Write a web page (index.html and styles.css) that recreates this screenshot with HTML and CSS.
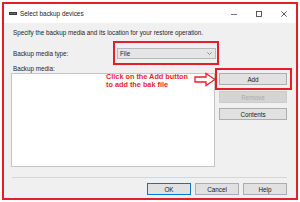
FILE: index.html
```html
<!DOCTYPE html>
<html>
<head>
<meta charset="utf-8">
<link rel="stylesheet" href="styles.css">
</head>
<body>
<div class="frame">
  <div class="titlebar">
    <svg class="ticon" width="8" height="3" viewBox="0 0 8 3"><rect x="0" y="0" width="8" height="3" fill="#3a3a3a"/><rect x="1" y="1" width="6" height="1" fill="#6a6a6a"/></svg>
    <span class="ttext">Select backup devices</span>
    <div class="wctrls">
      <svg width="6" height="6" viewBox="0 0 6 6"><line x1="0" y1="3.5" x2="6" y2="3.5" stroke="#555" stroke-width="0.8"/></svg>
      <svg width="6" height="6" viewBox="0 0 6 6"><rect x="0.5" y="0.5" width="5" height="5" fill="none" stroke="#333" stroke-width="0.8"/></svg>
      <svg width="6" height="6" viewBox="0 0 6 6"><path d="M0.3 0.3 L5.7 5.7 M5.7 0.3 L0.3 5.7" stroke="#333" stroke-width="0.8"/></svg>
    </div>
  </div>
  <div class="content">
    <p class="desc">Specify the backup media and its location for your restore operation.</p>
    <div class="typerow">
      <span class="lbl">Backup media type:</span>
      <div class="select hl-sel">
        <span>File</span>
        <svg class="chev" width="5" height="3" viewBox="0 0 5 3"><path d="M0.3 0.3 L2.5 2.5 L4.7 0.3" fill="none" stroke="#707070" stroke-width="0.7"/></svg>
      </div>
    </div>
    <div class="lbl2">Backup media:</div>
    <div class="main">
      <div class="listbox"></div>
      <div class="side">
        <button class="btn hl-add">Add</button>
        <button class="btn disabled">Remove</button>
        <button class="btn contents">Contents</button>
      </div>
      <div class="note">Click on the Add button<br>to add the bak file</div>
      <svg class="arrow" width="22" height="15" viewBox="0 0 22 15"><polygon points="1,5 12,5 12,1.5 21,7.5 12,13.5 12,10 1,10" fill="none" stroke="#e51f2a" stroke-width="1.3" stroke-linejoin="miter"/></svg>
    </div>
    <div class="sep"></div>
    <div class="footer">
      <button class="btn fbtn ok">OK</button>
      <button class="btn fbtn">Cancel</button>
      <button class="btn fbtn">Help</button>
    </div>
  </div>
</div>
</body>
</html>
```

FILE: styles.css
```css
html, body {
  margin: 0;
  padding: 0;
}
body {
  width: 300px;
  height: 202px;
  background: #ffffff;
  font-family: "Liberation Sans", Arial, sans-serif;
  overflow: hidden;
}
.frame {
  margin: 2px 0 0 2px;
  width: 296px;
  height: 198px;
  box-sizing: border-box;
  border: 2px solid #e51f2a;
  background: #f0f0f0;
  display: flex;
  flex-direction: column;
}
.titlebar {
  flex: none;
  height: 19px;
  background: #ffffff;
  display: flex;
  align-items: center;
  padding: 0 9px 0 5px;
}
.ticon {
  display: block;
  margin-right: 3px;
}
.ttext {
  font-size: 6.4px;
  line-height: 8px;
  color: #222222;
}
.wctrls {
  margin-left: auto;
  display: flex;
  align-items: center;
  gap: 19px;
}
.wctrls svg {
  display: block;
}
.content {
  flex: 1;
  padding: 0 9px 0 7px;
  display: flex;
  flex-direction: column;
}
.desc {
  margin: 6px 0 0 2px;
  font-size: 6.3px;
  line-height: 8px;
  color: #1e1e1e;
}
.typerow {
  margin-top: 11px;
  height: 11px;
  display: flex;
  align-items: center;
}
.lbl {
  width: 104px;
  padding-left: 2px;
  font-size: 6.3px;
  line-height: 8px;
  color: #1e1e1e;
}
.select {
  position: relative;
  width: 99px;
  height: 11px;
  box-sizing: border-box;
  border: 1px solid #b8b8b8;
  background: #e5e5e5;
  display: flex;
  align-items: center;
  padding: 0 3px 0 2px;
  font-size: 6.3px;
  color: #1e1e1e;
}
.chev {
  margin-left: auto;
  display: block;
}
.hl-sel::after {
  content: "";
  position: absolute;
  left: -5px;
  right: -4px;
  top: -8px;
  bottom: -7px;
  border: 2px solid #e51f2a;
}
.lbl2 {
  margin-top: 6px;
  padding-left: 2px;
  font-size: 6.3px;
  line-height: 8px;
  color: #1e1e1e;
}
.main {
  position: relative;
  display: flex;
  gap: 4px;
  height: 94px;
}
.listbox {
  width: 204px;
  box-sizing: border-box;
  border: 1px solid #c6c6c6;
  background: #ffffff;
}
.side {
  width: 68px;
  display: flex;
  flex-direction: column;
}
.btn {
  box-sizing: border-box;
  height: 12px;
  margin: 0;
  padding: 0;
  border: 1px solid #adadad;
  background: #e1e1e1;
  font-family: "Liberation Sans", Arial, sans-serif;
  font-size: 6.3px;
  color: #1a1a1a;
  display: flex;
  align-items: center;
  justify-content: center;
}
.hl-add {
  position: relative;
}
.hl-add::after {
  content: "";
  position: absolute;
  left: -5px;
  right: -6px;
  top: -6px;
  bottom: -6px;
  border: 2px solid #e51f2a;
}
.disabled {
  margin-top: 6px;
  background: #d4d4d4;
  border-color: #cccccc;
  color: #a9a9a9;
}
.contents {
  margin-top: 5px;
}
.note {
  position: absolute;
  left: 95px;
  top: 0;
  font-weight: bold;
  font-size: 7.3px;
  line-height: 8px;
  color: #e51f2a;
}
.arrow {
  position: absolute;
  left: 183px;
  top: -1px;
  display: block;
}
.sep {
  margin: 10px 0 0 1px;
  height: 1px;
  background: #d6d6d6;
}
.footer {
  margin-top: 5px;
  display: flex;
  justify-content: flex-end;
  gap: 4px;
}
.fbtn {
  width: 44px;
}
.ok {
  border-color: #0078d7;
}
```
